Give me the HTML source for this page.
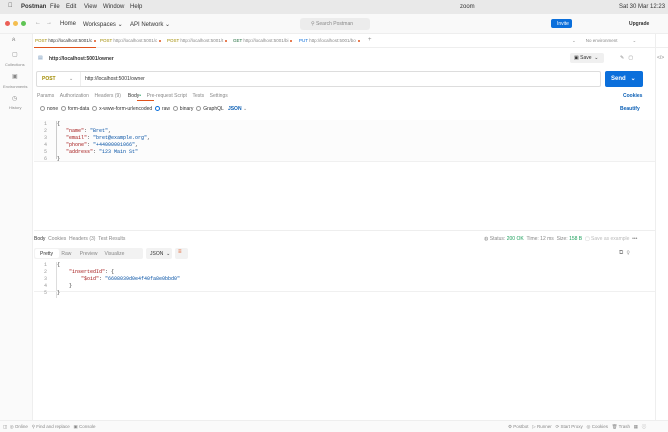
<!DOCTYPE html>
<html><head><meta charset="utf-8"><style>
*{margin:0;padding:0;box-sizing:border-box}
body{width:668px;height:432px;overflow:hidden;background:#fff;font-family:"Liberation Sans",sans-serif;color:#333;position:relative}
.a{position:absolute;white-space:nowrap}
.s5{font-size:5px}.s6{font-size:6px}.s7{font-size:7px}
.mono{font-family:"Liberation Mono",monospace}
.g{color:#888}
.k{color:#a31515}.v{color:#0451a5}
.dot{display:inline-block;width:2px;height:2px;background:#e0521b;border-radius:50%;vertical-align:middle;margin-left:2px}
.r{display:inline-block;width:5px;height:5px;border:0.6px solid #999;border-radius:50%;vertical-align:-1px;margin-right:2px}
</style></head><body>
<!-- mac menubar -->
<div class="a" style="left:0;top:0;width:668px;height:14px;background:#e9e9e9"></div>
<div class="a s6" style="left:8px;top:3px;font-weight:bold">&#63743;</div>
<div class="a s6" style="left:21px;top:4px;font-weight:bold">Postman</div>
<div class="a s6" style="left:50px;top:4px">File</div>
<div class="a s6" style="left:66px;top:4px">Edit</div>
<div class="a s6" style="left:84px;top:4px">View</div>
<div class="a s6" style="left:103px;top:4px">Window</div>
<div class="a s6" style="left:130px;top:4px">Help</div>
<div class="a s6" style="left:460px;top:4px">zoom</div>
<div class="a s6" style="left:619px;top:4px">Sat 30 Mar 12:23</div>
<!-- window top -->
<div class="a" style="left:0;top:14px;width:668px;height:20px;background:#f9f9f9;border-bottom:1px solid #eee"></div>
<div class="a" style="left:5px;top:21px;width:5px;height:5px;border-radius:50%;background:#ec5f56"></div>
<div class="a" style="left:13px;top:21px;width:5px;height:5px;border-radius:50%;background:#f4be4f"></div>
<div class="a" style="left:21px;top:21px;width:5px;height:5px;border-radius:50%;background:#5fc454"></div>
<div class="a s6 g" style="left:35px;top:20px">&larr;&nbsp;&nbsp;&nbsp;&rarr;</div>
<div class="a s6" style="left:60px;top:21px">Home</div>
<div class="a s6" style="left:83px;top:21px">Workspaces ⌄</div>
<div class="a s6" style="left:130px;top:21px">API Network ⌄</div>
<div class="a" style="left:300px;top:18px;width:70px;height:12px;background:#ececec;border-radius:3px"></div>
<div class="a s5 g" style="left:311px;top:21px">&#9906; Search Postman</div>
<div class="a" style="left:551px;top:19px;width:21px;height:9px;background:#0b6fdb;border-radius:2px"></div>
<div class="a s5" style="left:557px;top:21px;color:#fff">Invite</div>
<div class="a s5" style="left:629px;top:21px;font-weight:bold">Upgrade</div>
<!-- sidebar -->
<div class="a" style="left:0;top:34px;width:33px;height:386px;background:#fafafa;border-right:1px solid #eee"></div>
<div class="a s6 g" style="left:12px;top:37px">ጰ</div>
<div class="a s6 g" style="left:12px;top:51px">▢</div>
<div class="a g" style="left:5px;top:62px;font-size:4px">Collections</div>
<div class="a s6 g" style="left:12px;top:73px">▣</div>
<div class="a g" style="left:3px;top:84px;font-size:4px">Environments</div>
<div class="a s6 g" style="left:12px;top:95px">◷</div>
<div class="a g" style="left:9px;top:105px;font-size:4px">History</div>
<!-- tabs -->
<div class="a" style="left:34px;top:34px;width:634px;height:14px;border-bottom:1px solid #eee"></div>
<div class="a" style="left:34px;top:47px;width:62px;height:1px;background:#e0521b"></div>
<div class="a" style="left:35px;top:38px;font-size:4.5px"><span style="color:#a18b00">POST</span> http://localhost:5001/c<span class="dot"></span></div>
<div class="a g" style="left:100px;top:38px;font-size:4.5px"><span style="color:#a18b00">POST</span> http://localhost:5001/c<span class="dot"></span></div>
<div class="a g" style="left:167px;top:38px;font-size:4.5px"><span style="color:#a18b00">POST</span> http://localhost:5001/t<span class="dot"></span></div>
<div class="a g" style="left:233px;top:38px;font-size:4.5px"><span style="color:#1e6b3a">GET</span> http://localhost:5001/bi<span class="dot"></span></div>
<div class="a g" style="left:299px;top:38px;font-size:4.5px"><span style="color:#0b6fdb">PUT</span> http://localhost:5001/bo<span class="dot"></span></div>
<div class="a s6 g" style="left:368px;top:37px">+</div>
<div class="a g" style="left:572px;top:38px;font-size:4.5px">⌄&nbsp;&nbsp;&nbsp;&nbsp;&nbsp;&nbsp;&nbsp;&nbsp;No environment&nbsp;&nbsp;&nbsp;&nbsp;&nbsp;&nbsp;&nbsp;&nbsp;&nbsp;&nbsp;&nbsp;&nbsp;⌄</div>
<div class="a" style="left:655px;top:34px;width:1px;height:386px;background:#eee"></div>
<!-- request -->
<div class="a s5" style="left:38px;top:55px;color:#6b8fb5">&#9636;</div>
<div class="a s5" style="left:49px;top:56px;font-weight:bold">http://localhost:5001/owner</div>
<div class="a" style="left:570px;top:53px;width:34px;height:10px;background:#f0f0f0;border-radius:2px"></div>
<div class="a s5" style="left:574px;top:55px">▣ Save&nbsp;&nbsp;⌄</div>
<div class="a s5 g" style="left:620px;top:55px">✎&nbsp;&nbsp;&nbsp;▢</div>
<div class="a s5 g" style="left:657px;top:55px">&lt;/&gt;</div>
<div class="a" style="left:36px;top:71px;width:565px;height:16px;border:1px solid #ddd;border-radius:2px"></div>
<div class="a" style="left:80px;top:72px;width:1px;height:14px;background:#eee"></div>
<div class="a s5" style="left:42px;top:76px;color:#a18b00;font-weight:bold">POST</div>
<div class="a s5 g" style="left:69px;top:76px">⌄</div>
<div class="a s5" style="left:85px;top:76px">http://localhost:5001/owner</div>
<div class="a" style="left:605px;top:71px;width:38px;height:16px;background:#0b6fdb;border-radius:2px"></div>
<div class="a s6" style="left:611px;top:75px;color:#fff;font-weight:bold">Send&nbsp;&nbsp;&nbsp;⌄</div>
<div class="a s5 g" style="left:37px;top:93px">Params&nbsp;&nbsp;&nbsp;&nbsp;Authorization&nbsp;&nbsp;&nbsp;&nbsp;Headers (9)&nbsp;&nbsp;&nbsp;&nbsp;&nbsp;<span style="color:#333">Body</span><span style="color:#1b9e5a">•</span>&nbsp;&nbsp;&nbsp;&nbsp;Pre-request Script&nbsp;&nbsp;&nbsp;&nbsp;Tests&nbsp;&nbsp;&nbsp;&nbsp;Settings</div>
<div class="a" style="left:137px;top:100px;width:17px;height:1px;background:#e0521b"></div>
<div class="a s5" style="left:623px;top:93px;color:#0b5fb5;font-weight:bold">Cookies</div>
<div class="a s5" style="left:40px;top:106px"><span class="r"></span>none&nbsp;&nbsp;<span class="r"></span>form-data&nbsp;&nbsp;<span class="r"></span>x-www-form-urlencoded&nbsp;&nbsp;<span class="r" style="border:1.5px solid #0b6fdb"></span>raw&nbsp;&nbsp;<span class="r"></span>binary&nbsp;&nbsp;<span class="r"></span>GraphQL&nbsp;&nbsp;&nbsp;<span style="color:#0b5fb5;font-weight:bold">JSON</span> <span class="g">⌄</span></div>
<div class="a s5" style="left:620px;top:106px;color:#0b5fb5;font-weight:bold">Beautify</div>
<!-- editor -->
<div class="a" style="left:34px;top:120px;width:621px;height:42px;background:#fcfcfc;border-bottom:1px solid #f0f0f0"></div>
<div class="a" style="left:56px;top:121px;width:1px;height:38px;background:#ccc"></div>
<div class="a mono" style="left:44px;top:121px;font-size:5px;line-height:7px;color:#999;text-align:right">1<br>2<br>3<br>4<br>5<br>6</div>
<div class="a mono" style="left:57px;top:121px;font-size:5px;line-height:7px">{<br>&nbsp;&nbsp;&nbsp;<span class="k">"name"</span>: <span class="v">"Bret"</span>,<br>&nbsp;&nbsp;&nbsp;<span class="k">"email"</span>: <span class="v">"bret@example.org"</span>,<br>&nbsp;&nbsp;&nbsp;<span class="k">"phone"</span>: <span class="v">"+44000001066"</span>,<br>&nbsp;&nbsp;&nbsp;<span class="k">"address"</span>: <span class="v">"123 Main St"</span><br>}</div>
<div class="a" style="left:34px;top:230px;width:621px;height:1px;background:#eee"></div>
<!-- response -->
<div class="a s5 g" style="left:34px;top:236px"><span style="color:#333">Body</span>&nbsp;&nbsp;Cookies&nbsp;&nbsp;Headers (3)&nbsp;&nbsp;Test Results</div>
<div class="a s5 g" style="left:484px;top:236px">◍&nbsp;Status: <span style="color:#1b9e5a">200 OK</span>&nbsp;&nbsp;Time: 12 ms&nbsp;&nbsp;Size: <span style="color:#1b9e5a">158 B</span>&nbsp;&nbsp;<span style="color:#bbb">▢ Save as example</span>&nbsp;&nbsp;•••</div>
<div class="a" style="left:34px;top:248px;width:109px;height:11px;background:#f2f2f2;border-radius:2px"></div>
<div class="a" style="left:35px;top:249px;width:24px;height:9px;background:#fff;border-radius:2px"></div>
<div class="a s5 g" style="left:40px;top:251px"><span style="color:#333">Pretty</span>&nbsp;&nbsp;&nbsp;&nbsp;&nbsp;&nbsp;Raw&nbsp;&nbsp;&nbsp;&nbsp;&nbsp;&nbsp;Preview&nbsp;&nbsp;&nbsp;&nbsp;&nbsp;Visualize</div>
<div class="a" style="left:146px;top:248px;width:26px;height:11px;background:#f2f2f2;border-radius:2px"></div>
<div class="a s5" style="left:150px;top:251px">JSON&nbsp;&nbsp;⌄</div>
<div class="a" style="left:175px;top:248px;width:13px;height:11px;background:#f2f2f2;border-radius:2px"></div>
<div class="a s6" style="left:178px;top:249px;color:#e0521b">≡</div>
<div class="a s6 g" style="left:619px;top:250px">⧉&nbsp;&nbsp;⚲</div>
<div class="a" style="left:56px;top:262px;width:1px;height:36px;background:#ddd"></div>
<div class="a" style="left:34px;top:291px;width:621px;height:1px;background:#f0f0f0"></div>
<div class="a mono" style="left:44px;top:262px;font-size:5px;line-height:7px;color:#999">1<br>2<br>3<br>4<br>5</div>
<div class="a mono" style="left:57px;top:262px;font-size:5px;line-height:7px">{<br>&nbsp;&nbsp;&nbsp;&nbsp;<span class="k">"insertedId"</span>: {<br>&nbsp;&nbsp;&nbsp;&nbsp;&nbsp;&nbsp;&nbsp;&nbsp;<span class="k">"$oid"</span>: <span class="v">"6608039d0e4f40fa8e0bbd0"</span><br>&nbsp;&nbsp;&nbsp;&nbsp;}<br>}</div>
<!-- status bar -->
<div class="a" style="left:0;top:420px;width:668px;height:12px;background:#fafafa;border-top:1px solid #eee"></div>
<div class="a g" style="left:3px;top:424px;font-size:4.5px">◫&nbsp;&nbsp;◎ Online&nbsp;&nbsp;&nbsp;⚲ Find and replace&nbsp;&nbsp;&nbsp;▣ Console</div>
<div class="a g" style="left:508px;top:424px;font-size:4.5px">⚙ Postbot&nbsp;&nbsp;&nbsp;▷ Runner&nbsp;&nbsp;&nbsp;⟳ Start Proxy&nbsp;&nbsp;&nbsp;◎ Cookies&nbsp;&nbsp;&nbsp;🗑 Trash&nbsp;&nbsp;&nbsp;▦&nbsp;&nbsp;&nbsp;ⓘ</div>
</body></html>
